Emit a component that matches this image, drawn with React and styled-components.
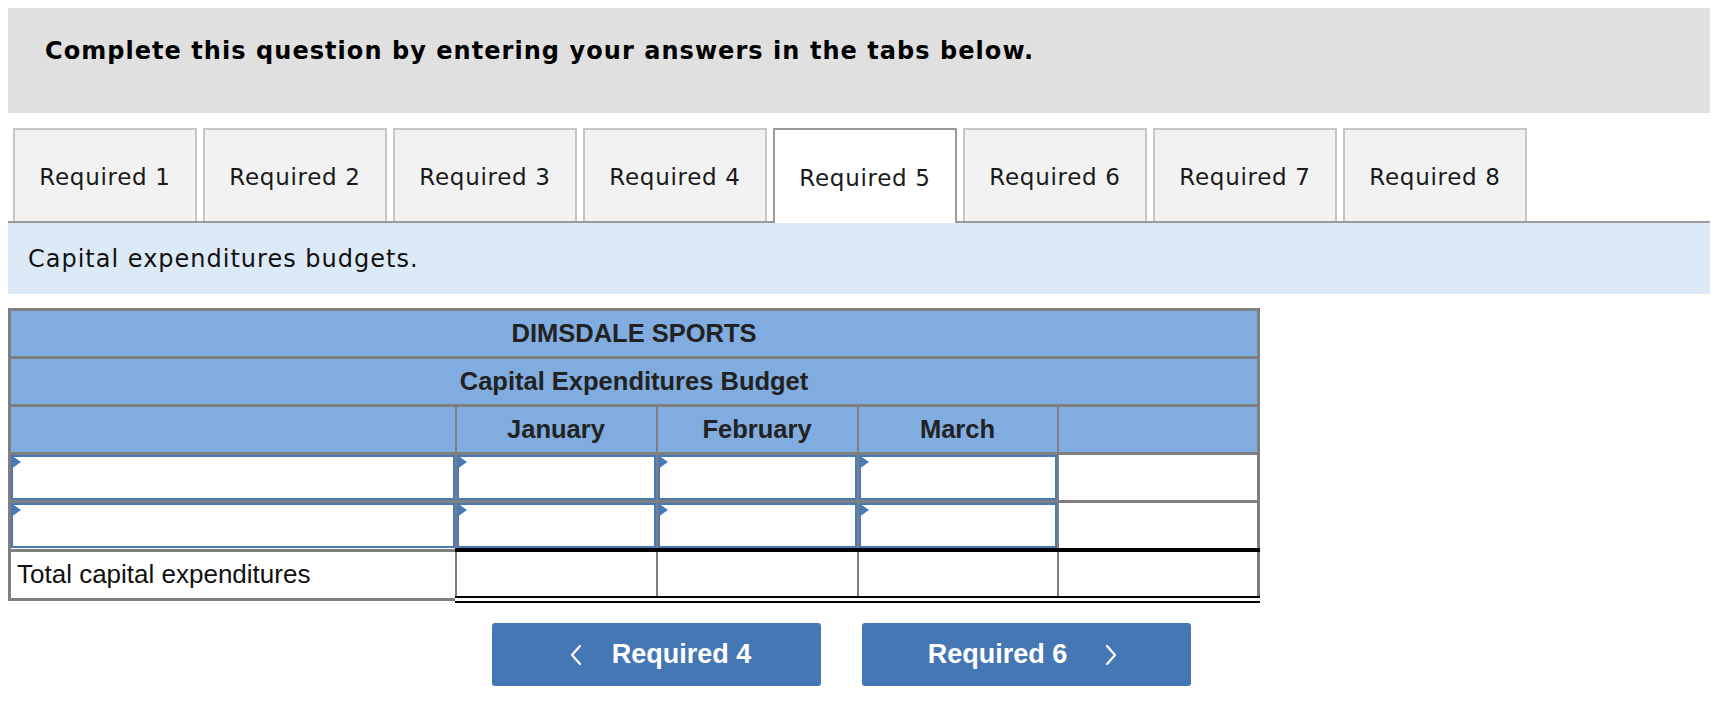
import React from "react";
import styled, { createGlobalStyle, css } from "styled-components";

const GlobalStyle = createGlobalStyle`
  html, body { margin: 0; padding: 0; background: #fff; }
  body { font-family: "DejaVu Sans", Verdana, sans-serif; }
`;

const Page = styled.div`
  padding: 8px 12px 30px 8px;
`;

const Banner = styled.div`
  box-sizing: border-box;
  height: 105px;
  padding: 30px 0 0 37px;
  background: #e0e0e0;
  color: #000;
  font: bold 24px/27px "DejaVu Sans", Verdana, sans-serif;
  letter-spacing: 1.05px;
`;

const TabBar = styled.div`
  display: flex;
  align-items: flex-end;
  gap: 6px;
  margin-top: 15px;
  padding-left: 5px;
  border-bottom: 2px solid #9a9a9a;
`;

const Tab = styled.div`
  box-sizing: border-box;
  width: 184px;
  height: 93px;
  display: flex;
  align-items: center;
  justify-content: center;
  padding-top: 2px;
  background: #f2f2f2;
  border: 2px solid #c6c6c6;
  border-bottom: none;
  color: #1a1a1a;
  font: 23px "DejaVu Sans", Verdana, sans-serif;
  letter-spacing: 0.7px;
  ${(p) =>
    p.$active &&
    css`
      height: 95px;
      margin-bottom: -2px;
      background: #fff;
      border-color: #9a9a9a;
    `}
`;

const Prompt = styled.div`
  height: 71px;
  display: flex;
  align-items: center;
  padding-left: 20px;
  background: #dceaf7;
  color: #111;
  font: 24px "DejaVu Sans", Verdana, sans-serif;
  letter-spacing: 1px;
`;

const Sheet = styled.table`
  margin-top: 14px;
  width: 1249px;
  table-layout: fixed;
  border-collapse: collapse;
  border: 3px solid #7f7f7f;
  font-family: "Liberation Sans", Arial, sans-serif;
  color: #222;
`;

const Col = styled.col`
  width: ${(p) => p.$w}px;
`;

const Cell = styled.td`
  height: 45px;
  padding: 0;
  border-style: solid;
  border-color: #7f7f7f;
  border-width: 3px 2px;
  background: #fff;
  vertical-align: middle;
`;

const HeadCell = styled(Cell)`
  background: #80acdf;
  text-align: center;
  font-weight: bold;
  font-size: 25.5px;
  color: #222;
`;

const LabelCell = styled(Cell)`
  padding-left: 6px;
  font-size: 26px;
  color: #111;
`;

const TotalCell = styled(Cell)`
  height: 44px;
  border-top: 4px solid #000;
  border-bottom: 7px double #000;
`;

const Entry = styled.div`
  position: relative;
  box-sizing: border-box;
  height: 45px;
  border: 2px solid #4a7ab6;

  &::before {
    content: "";
    position: absolute;
    left: -2px;
    top: -2px;
    border-style: solid;
    border-width: 7px 0 7px 10px;
    border-color: transparent transparent transparent #4a7ab6;
  }
`;

const NavRow = styled.div`
  display: flex;
  gap: 41px;
  margin-top: 20px;
  padding-left: 484px;
`;

const NavButton = styled.button`
  box-sizing: border-box;
  width: 329px;
  height: 63px;
  display: flex;
  align-items: center;
  justify-content: center;
  gap: ${(p) => (p.$next ? 38 : 30)}px;
  padding: 0 ${(p) => (p.$next ? 8 : 0)}px 0 ${(p) => (p.$next ? 0 : 8)}px;
  border: none;
  border-radius: 3px;
  background: #4577b4;
  color: #fff;
  font: bold 27px "Liberation Sans", Arial, sans-serif;
  cursor: pointer;
`;

const Chevron = ({ dir }) => (
  <svg width="12" height="22" viewBox="0 0 12 22" aria-hidden="true">
    <polyline
      points={dir === "left" ? "10,2 2,11 10,20" : "2,2 10,11 2,20"}
      fill="none"
      stroke="#fff"
      strokeWidth="2.2"
      strokeLinecap="round"
      strokeLinejoin="round"
    />
  </svg>
);

const tabs = [1, 2, 3, 4, 5, 6, 7, 8];
const months = ["January", "February", "March"];
const widths = [446, 201, 201, 200, 201];

function EntryRow() {
  return (
    <tr>
      <Cell>
        <Entry />
      </Cell>
      {months.map((m) => (
        <Cell key={m}>
          <Entry />
        </Cell>
      ))}
      <Cell />
    </tr>
  );
}

export default function App() {
  return (
    <Page>
      <GlobalStyle />
      <Banner>Complete this question by entering your answers in the tabs below.</Banner>

      <TabBar>
        {tabs.map((n) => (
          <Tab key={n} $active={n === 5}>
            Required {n}
          </Tab>
        ))}
      </TabBar>

      <Prompt>Capital expenditures budgets.</Prompt>

      <Sheet>
        <colgroup>
          {widths.map((w, i) => (
            <Col key={i} $w={w} />
          ))}
        </colgroup>
        <tbody>
          <tr>
            <HeadCell colSpan={5}>DIMSDALE SPORTS</HeadCell>
          </tr>
          <tr>
            <HeadCell colSpan={5}>Capital Expenditures Budget</HeadCell>
          </tr>
          <tr>
            <HeadCell />
            {months.map((m) => (
              <HeadCell key={m}>{m}</HeadCell>
            ))}
            <HeadCell />
          </tr>
          <EntryRow />
          <EntryRow />
          <tr>
            <LabelCell>Total capital expenditures</LabelCell>
            <TotalCell />
            <TotalCell />
            <TotalCell />
            <TotalCell />
          </tr>
        </tbody>
      </Sheet>

      <NavRow>
        <NavButton>
          <Chevron dir="left" />
          Required 4
        </NavButton>
        <NavButton $next>
          Required 6
          <Chevron dir="right" />
        </NavButton>
      </NavRow>
    </Page>
  );
}
